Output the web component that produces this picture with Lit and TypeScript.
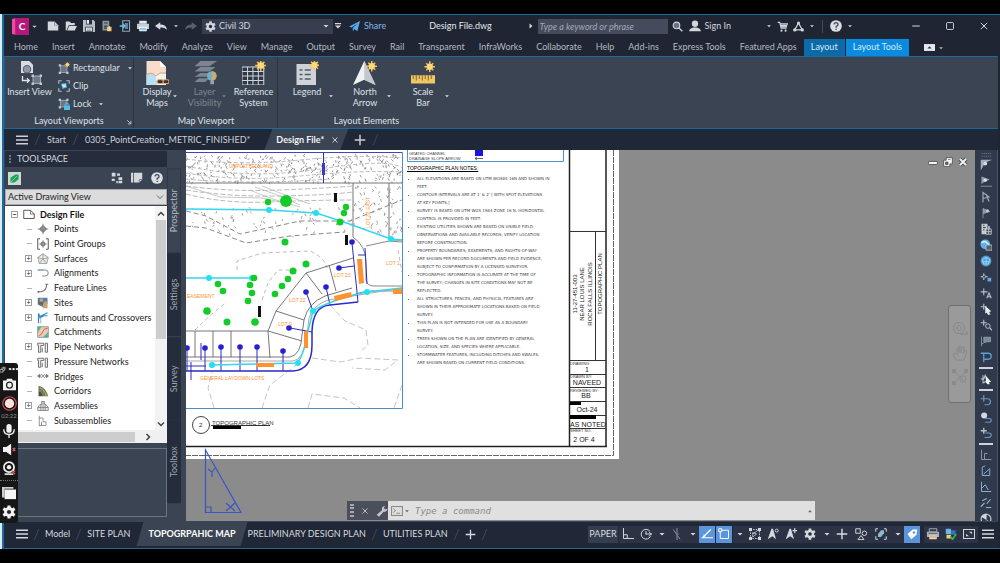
import { LitElement, html, css, svg } from "lit";
import { customElement } from "lit/decorators.js";
import { classMap } from "lit/directives/class-map.js";

const sun = (x: number, y: number, r = 3) => svg`
  <path d=${`M${x} ${y - r * 1.7}V${y + r * 1.7}M${x - r * 1.7} ${y}H${x + r * 1.7}M${x - r * 1.1} ${y - r * 1.1}L${x + r * 1.1} ${y + r * 1.1}M${x + r * 1.1} ${y - r * 1.1}L${x - r * 1.1} ${y + r * 1.1}`} stroke="#f3c25c" stroke-width="1"/>
  <circle cx=${x} cy=${y} r=${r} fill="#ffd778"/>`;

/* Every glyph is drawn on a 16 x 16 grid. */
const GLYPHS: Record<string, unknown> = {
  logo: svg`<path d="M0 1L4 0V16L0 15Z" fill="#f04aa6"/><path d="M3 0H16V16H3Z" fill="#b5177a"/>`,
  caret: svg`<path d="M3 6H13L8 11Z" fill="currentColor"/>`,
  caretUp: svg`<path d="M3 11H13L8 5Z" fill="currentColor"/>`,
  caretRight: svg`<path d="M5 3V13L11 8Z" fill="currentColor"/>`,
  dropline: svg`<path d="M3 3H13V5H3ZM3 7H13L8 12Z" fill="currentColor"/>`,
  newfile: svg`<path d="M1 2H10L15 7V14H1Z" fill="#d5d8dd"/><path d="M10 2V7H15" fill="none" stroke="#7d8592"/>`,
  open: svg`<path d="M1 14V2H6L8 4H13V7H5L2 14Z" fill="#d5d8dd"/><path d="M5.500 8H16L13 14H3Z" fill="#d5d8dd"/>`,
  save: svg`<path d="M0 0H14L16 2V16H0Z" fill="#b9bfc9"/><path d="M4 0H12V6H4ZM3 9H13V16H3Z" fill="#2a3140"/><path d="M5 0H8V5H5ZM4 10H12V15H4Z" fill="#e6e8ec"/><path d="M5 12H11M5 14H11" stroke="#7d8592"/>`,
  saveweb: svg`<path d="M2 1H11V14H2Z" fill="#8b92a0"/><path d="M4 3H9V5H4ZM4 7H9V12H4Z" fill="#505968"/><path d="M8 9H14V15H8Z" fill="#e9c46c"/><path d="M11 8V14" stroke="#fff0c4"/>`,
  export: svg`<path d="M5 1H14V15H5Z" fill="none" stroke="#8fa5b8" stroke-width="1.500"/><path d="M8 4H12V12H8Z" fill="#6c7f92"/><path d="M1 8H7M5 5L8 8L5 11" stroke="#5cc2ef" stroke-width="1.800" fill="none"/>`,
  print: svg`<path d="M3 1H13V5H3Z" fill="#e6e8ec"/><path d="M0 5H16V12H0Z" fill="#c9ced6"/><path d="M3 9H13V15H3Z" fill="#fff"/><path d="M4 11H12M4 13H12" stroke="#3ca3dd"/>`,
  printOrange: svg`<path d="M3 1H13V5H3Z" fill="none" stroke="#c9ced6"/><path d="M0 5H16V12H0Z" fill="#aeb4bf"/><path d="M2 7H14" stroke="#3a4353"/><path d="M3 10H13V15H3Z" fill="#f3d6b9"/><path d="M4 12H12" stroke="#c98850"/>`,
  undo: svg`<path d="M0 8L7 3V6Q15 6 16 13Q12 9.500 7 10V13Z" fill="#d5d8dd"/>`,
  redo: svg`<path d="M16 8L9 3V6Q1 6 0 13Q4 9.500 9 10V13Z" fill="#596171"/>`,
  gear: svg`<path d="M8 .5V15.500M1.500 4.250L14.500 11.750M14.500 4.250L1.500 11.750" stroke="currentColor" stroke-width="3.600"/><circle cx="8" cy="8" r="5.600" fill="currentColor"/><circle cx="8" cy="8" r="2.400" fill="#222938"/>`,
  plane: svg`<path d="M0 8L16 0L12 15L8 11.500L5.500 15V10L13 3L4 9.500Z" fill="#58aef0"/>`,
  search: svg`<circle cx="6.500" cy="6.500" r="4.800" fill="#6b7382" stroke="currentColor" stroke-width="1.600"/><path d="M10 10L15 15" stroke="currentColor" stroke-width="2"/>`,
  user: svg`<circle cx="8" cy="5" r="4.200" fill="currentColor"/><path d="M0 15Q1 10.500 6 10H10Q15 10.500 16 15Z" fill="currentColor"/>`,
  cart: svg`<path d="M1 2H4L6 10.500H14M5 4H15L13.500 8.500H6" fill="none" stroke="currentColor" stroke-width="1.600"/><path d="M5 5H14L13 8H6Z" fill="currentColor"/><circle cx="6.500" cy="14" r="1.500" fill="currentColor"/><circle cx="12.500" cy="14" r="1.500" fill="currentColor"/>`,
  share3: svg`<path d="M8 3L2.500 13H13.500Z" fill="none" stroke="currentColor" stroke-width="1.800"/><circle cx="8" cy="3" r="2.200" fill="currentColor"/><circle cx="2.500" cy="13" r="2.400" fill="currentColor"/><circle cx="13.500" cy="13" r="2.400" fill="currentColor"/>`,
  help: svg`<circle cx="8" cy="8" r="7.800" fill="#dcdfe3"/><path d="M5.500 6Q5.500 3.500 8 3.500Q10.700 3.500 10.700 6Q10.700 7.500 8.200 8.500V10.300M8.200 11.500V13.300" fill="none" stroke="#3d4655" stroke-width="1.700"/>`,
  min: svg`<path d="M2 8H14" stroke="currentColor" stroke-width="1.600"/>`,
  max: svg`<rect x="2.500" y="2.500" width="11" height="11" rx="1.500" fill="none" stroke="currentColor" stroke-width="1.500"/>`,
  close: svg`<path d="M3 3L13 13M13 3L3 13" stroke="currentColor" stroke-width="1.600"/>`,
  docMin: svg`<rect x="1" y="7" width="14" height="5" rx="1" fill="#f4f4f4" stroke="#555" stroke-width="1.500"/>`,
  docRestore: svg`<path d="M5 1H15V11H11V15H1V5H5Z" fill="#f4f4f4" stroke="#555" stroke-width="1.400"/><path d="M4 8H8V12H4ZM8 4H12" fill="#555" stroke="#555"/>`,
  docClose: svg`<path d="M3 3L13 13M13 3L3 13" stroke="#555" stroke-width="6"/><path d="M3 3L13 13M13 3L3 13" stroke="#f4f4f4" stroke-width="3.200"/>`,
  panelbtn: svg`<rect x="0" y="3" width="16" height="10" fill="#e6e8ec"/><path d="M5 9.500H11L8 6Z" fill="#2a3140"/>`,
  launcher: svg`<path d="M3 3L11 11M13 5V13H5" fill="none" stroke="currentColor" stroke-width="2"/>`,
  insertView: svg`<path d="M2 0H7.500L10 2.500V8H2Z" fill="#d9dce1"/><circle cx="6" cy="5.500" r="2.500" fill="#8d97a6" stroke="#566071" stroke-width=".7"/><path d="M3 10V13H7M6 11.500L7.500 13L6 14.500" fill="none" stroke="#dfe2e6" stroke-width=".9"/><rect x="10" y="10" width="5" height="5" fill="#707988" stroke="#aeb5c0" stroke-width=".6"/><path d="M9 9h1.600v1.600H9ZM14.400 9H16v1.600h-1.600ZM9 14.400h1.600V16H9ZM14.400 14.400H16V16h-1.600Z" fill="#c3c8d0"/>`,
  rectview: svg`<rect x="3" y="5" width="9" height="9" fill="#6c7584" stroke="#aeb5c0"/><path d="M1 3h3v3H1ZM1 13h3v3H1ZM11 13h3v3h-3Z" fill="#c3c8d0"/>${sun(12.5, 3.5, 2.2)}`,
  clip: svg`<path d="M1 5V1H5M11 1H15V5M15 11V15H11M5 15H1V11" fill="none" stroke="#aeb5c0" stroke-width="1.600"/><path d="M4 5L11 4L12 10L6 12Z" fill="#4fb4e8"/><path d="M5 6L10 5.500L10.500 9L7 10Z" fill="#cdeafa"/>`,
  lock: svg`<rect x="3" y="3" width="9" height="9" fill="#6c7584" stroke="#aeb5c0"/><path d="M1 1h3v3H1ZM11 1h3v3h-3ZM1 11h3v3H1Z" fill="#c3c8d0"/><rect x="8" y="10" width="8" height="6" fill="#52c0e6"/><path d="M9.500 10V8Q12 5.500 14.500 8V10" fill="none" stroke="#52c0e6" stroke-width="1.300"/>`,
  displayMaps: svg`<path d="M1 0H10L14 4V16H1Z" fill="#f6dcc9"/><path d="M1 9Q5 7 7 10L8 16H1Z" fill="#b9e0f2"/><path d="M7 10Q10 7 14 9V16H8Z" fill="#f2f2ef"/><path d="M10 0L14 4H10Z" fill="#fff"/><path d="M1 9Q5 7 7 10Q10 7 14 8" fill="none" stroke="#c98b6e" stroke-width=".5"/><rect x="8" y="12.500" width="4.500" height="2.500" rx="1.200" fill="#3b3028" stroke="#e0a673" stroke-width=".8"/><rect x="12" y="12.500" width="4" height="2.500" rx="1.200" fill="#3b3028" stroke="#e0a673" stroke-width=".8"/>`,
  layers: svg`<path d="M5 0H16L11 3.500H1ZM5 4H15L11 7H1ZM5 8H12L9 10.500H1ZM4 11.500H11L8 14H1Z" fill="#7d8592"/><circle cx="12.500" cy="10" r="3.200" fill="#6ab1c9"/><path d="M12.500 6.800A3.200 3.200 0 0 1 12.500 13.200Z" fill="#c9ac70"/><path d="M11.500 13H14V15.500H11.500Z" fill="#98a1ae"/>`,
  refsys: svg`<rect x="0" y="4" width="14.500" height="12" fill="#303847" stroke="#cdd1d8" stroke-width=".7"/><path d="M0 7H14.500M0 10H14.500M0 13H14.500M3.700 4V16M7.300 4V16M10.900 4V16" stroke="#cdd1d8" stroke-width=".7"/>${sun(12.5, 3, 2.2)}`,
  legend: svg`<path d="M1 2H12L14 4V16H1Z" fill="#cfd3d8"/><path d="M3 6H5M3 9H5M3 12H5M6.500 6H10.500M6.500 9H10.500M6.500 12H10.500" stroke="#525c6b" stroke-width=".9"/>${sun(13, 2.8, 2.1)}`,
  north: svg`<path d="M7.500 0L15 16L7.500 12.500L0 16Z" fill="#f0f1f3"/><path d="M7.500 0L15 16L7.500 12.500Z" fill="#c3c7cd"/>${sun(12.500, 3.5, 2.1)}`,
  scalebar: svg`<rect x="0" y="9.500" width="16" height="5.500" fill="#f1c766"/><path d="M1.500 9.500V12M3.500 9.500V13M5.500 9.500V12M7.500 9.500V13M9.500 9.500V12M11.500 9.500V13M13.500 9.500V12" stroke="#6f5a2b" stroke-width=".6"/>${sun(12.5, 3.8, 2.1)}`,
  menu: svg`<path d="M0 3H16M0 8H16M0 13H16" stroke="currentColor" stroke-width="2"/>`,
  plus: svg`<path d="M8 1V15M1 8H15" stroke="currentColor" stroke-width="1.900"/>`,
  leaf: svg`<rect width="16" height="16" fill="#cfd8d4"/><path d="M3 13V7L9 3H13V9L8 13Z" fill="#1fa35b"/><path d="M3 13L11 5" stroke="#7be0a6"/>`,
  tree: svg`<path d="M1 1H6V6H1ZM1 9H5V12H1ZM10 7H15V11H10ZM10 12H15V15H10ZM7 12H9V15H7ZM8 2H12V5H8Z" fill="#d5d8dd"/>`,
  pane: svg`<path d="M0 1H3V14H0ZM4 1H15V10L11 14H4Z" fill="#d5d8dd"/><path d="M11 14V10H15" fill="none" stroke="#5a6373"/>`,
  doc: svg`<path d="M1 3H10L15 8V14H1Z" fill="#fff" stroke="#555" stroke-width="1.300"/><path d="M10 3V8H15" fill="none" stroke="#555"/>`,
  points: svg`<path d="M8 0L10 6L16 8L10 10L8 16L6 10L0 8L6 6Z" fill="#8c8c8c"/><circle cx="8" cy="8" r="3.500" fill="#8c8c8c" stroke="#777"/>`,
  pgroups: svg`<path d="M4 1H1V15H4M12 1H15V15H12" fill="none" stroke="#555" stroke-width="1.300"/><path d="M8 3V13M3 8H13" stroke="#666"/><circle cx="8" cy="8" r="2.800" fill="#999" stroke="#555"/>`,
  surfaces: svg`<path d="M8 1L15 6L13 14H3L1 6ZM1 6L8 8L15 6M8 8L3 14M8 8L13 14M8 1V8" fill="#e8e8e8" stroke="#8c8c8c"/>`,
  align: svg`<path d="M1 4H11Q15 4 15 8Q15 12 11 12H7" fill="none" stroke="#7d8a96" stroke-width="1.300"/><path d="M1 4H9" stroke="#6f93b5"/>`,
  feature: svg`<path d="M1 13H5Q13 12 13 3M11 3H15" fill="none" stroke="#777" stroke-width="1.500"/><circle cx="2" cy="13" r="1.500" fill="#777"/>`,
  sites: svg`<path d="M1 1H14V9L9 14L1 10Z" fill="#557fa5"/><path d="M4 2H8V6H4ZM10 6H14V15H8V10Z" fill="#c7a46b"/><path d="M1 7H8V10H3Z" fill="#6b5f57"/>`,
  turnout: svg`<path d="M2 15V2L4 6L14 1M3 8L9 5L14 5" fill="none" stroke="#2f86c9" stroke-width="1.600"/><path d="M5 15V8" stroke="#999"/>`,
  catch: svg`<rect x="1" y="1" width="14" height="14" fill="#f0c9b0" stroke="#7a8a83"/><path d="M1 1H6L1 9ZM8 15L15 8V15Z" fill="#4db6a0"/><path d="M3 13Q7 11 8 7T14 3" fill="none" stroke="#a2514c"/>`,
  pipes: svg`<path d="M1 3H9V6H5V15H2V6H1ZM11 3H14V15H11ZM7 9V15" fill="#ececec" stroke="#666" stroke-width="1.200"/>`,
  bridges: svg`<path d="M0 8L4 5V11ZM16 8L12 5V11Z" fill="#777"/><circle cx="6" cy="8" r="1.800" fill="none" stroke="#777"/><circle cx="10" cy="8" r="1.800" fill="none" stroke="#777"/>`,
  corridors: svg`<path d="M2 1Q12 3 15 15H8Q7 9 2 8Z" fill="#6f7f55"/><path d="M2 1V15H8Q7 9 2 8Z" fill="#4e4e48"/><path d="M4 4Q11 7 12 15" stroke="#d9c76b" fill="none"/>`,
  assemblies: svg`<path d="M1 10L4 6H6V2H10V6H12L15 10V14H1ZM1 10H15M8 2V14M5 6V14M11 6V14" fill="#e8e8e8" stroke="#777"/>`,
  subasm: svg`<path d="M3 1V15M3 4H8V9H12V14H3M6 9V14" fill="none" stroke="#888" stroke-width="1.200"/>`,
  wrench: svg`<path d="M1 13L8 7Q7 2 12 1L10.500 4L12.500 6L15.500 4.500Q15 9 10 9L4 15.500Z" fill="#c3c7cf"/>`,
  prompt: svg`<rect x=".7" y="2" width="14.600" height="12" fill="#ddd" stroke="#8a8a8a" stroke-width="1.400"/><path d="M3 5L6 7.500L3 10M7 11H12" stroke="#777" fill="none"/>`,
  ortho: svg`<path d="M2 0V14H16M2 9H7V14" fill="none" stroke="currentColor" stroke-width="1.300"/>`,
  polar: svg`<path d="M13 4A6.500 6.500 0 1 0 14 11M7 8H16M12 5L15 8L12 11M8 8V4" fill="none" stroke="currentColor" stroke-width="1.300"/>`,
  iso: svg`<path d="M3 2L12 15M8 0V16" stroke="#8d95a3" stroke-width="1.300"/><path d="M11 7L8 11" stroke="#b65b5b"/>`,
  otrack: svg`<path d="M13 2L2 13H16" fill="none" stroke="currentColor" stroke-width="1.600"/><path d="M5 13Q6 9 3 9" stroke="currentColor" fill="none"/>`,
  osnap: svg`<path d="M3 3H14V14H3Z" fill="none" stroke="currentColor" stroke-width="1.300"/><path d="M1 1H5V5H1Z" fill="#6ba0dd" stroke="currentColor" stroke-width="1.200"/>`,
  selcycle: svg`<rect x="2" y="2" width="12" height="12" fill="none" stroke="currentColor" stroke-width="1.200" stroke-dasharray="2 1.500"/><path d="M0 0H4V4H0ZM12 12H16V16H12ZM12 0H16V4H12ZM0 12H4V16H0Z" fill="currentColor"/><path d="M12 3L5 8M5 6V12L10 8Z" fill="none" stroke="currentColor"/>`,
  annot: svg`<path d="M6 1L8 1L12 15L7 11L1 15Z" fill="currentColor"/><circle cx="13" cy="3.500" r="2" fill="none" stroke="currentColor" stroke-width="1.200"/>`,
  annotAdd: svg`<path d="M6 1L8 1L12 15L7 11L1 15Z" fill="currentColor"/><path d="M13 0V7M10 3.500H16" stroke="currentColor" stroke-width="1.500"/>`,
  isolate: svg`<path d="M1 1H7V7H1Z" fill="none" stroke="currentColor" stroke-width="1.300"/><circle cx="12.500" cy="7" r="3" fill="none" stroke="currentColor" stroke-width="1.300"/><path d="M8 10L12 15.500H4Z" fill="none" stroke="currentColor" stroke-width="1.300"/>`,
  hardware: svg`<path d="M1 5V1H4M12 1H15V5M15 11V15H12M4 15H1V11" fill="none" stroke="currentColor" stroke-width="1.300"/><path d="M4 12V8L8 3H12V7L8 12Z" fill="#8cb9cf"/>`,
  tag: svg`<path d="M2 8L9 2L15 2L14 9L7 15Z" fill="#fff"/><circle cx="10.500" cy="6" r="1.600" fill="#5b95dd"/>`,
  cloudmix: svg`<path d="M1 1H8V8H1Z" fill="#6fb5ea"/><path d="M8 3H14V9H8Z" fill="#3773b3"/><path d="M2 9H8V14H2Z" fill="#f1d173"/><path d="M7 11L10 15L15 8" fill="none" stroke="#3cb55c" stroke-width="2.200"/>`,
  full: svg`<rect x=".7" y="2" width="14.600" height="12" fill="none" stroke="currentColor" stroke-width="1.300"/><path d="M8 5H12V8ZM4 8V11H8Z" fill="currentColor"/>`,
  grip: svg`<path d="M1 5H15M1 9H15" stroke="#7d8696" stroke-width="1.300" stroke-dasharray="1.500 1.500"/>`,
  s1: svg`<path d="M1 15V1H16L7 5Z" fill="#a4aebb"/><circle cx="7" cy="6" r="2.500" fill="#d9dde2"/>`,
  s2: svg`<path d="M1 15H16" stroke="#98a3b1"/><path d="M2 12V2L13 6L6 9Z" fill="#98a3b1"/><circle cx="7" cy="7" r="2.200" fill="#d9dde2"/>`,
  s3: svg`<path d="M4 15V2L12 8L4 10M8 4L12 14" fill="none" stroke="#9aa5b2" stroke-width="1.700"/>`,
  s4: svg`<path d="M4 15V2L13 6L4 9" fill="#8a95a4" stroke="#9aa5b2"/><circle cx="10" cy="5" r="2" fill="#c2c8d0"/>`,
  s5: svg`<path d="M2 1H10V15H2ZM11 4H13V8H11Z" fill="#c5cad2"/><path d="M4 3H6M4 6H8M4 9H6" stroke="#3a4353" stroke-width="1.300"/><path d="M8 8H15V15H8Z" fill="#354052" stroke="#d5d9df"/><path d="M11.500 8V15M8 11.500H15" stroke="#d5d9df"/>`,
  s6: svg`<circle cx="7" cy="7" r="6.500" fill="#5cb2e8"/><path d="M2 5Q6 2 9 5T12 8" stroke="#d4efff" stroke-width="2" fill="none"/><path d="M8 8H16V15H8Z" fill="#57606f" stroke="#bcc3cc"/>`,
  s7: svg`<circle cx="8" cy="8" r="7.200" fill="#4b9fd6"/><path d="M3 6L8 3L13 6L11 12H5ZM8 3V13M3 9H13" fill="none" stroke="#b5dcf5"/>`,
  s8: svg`<path d="M5 3V12M1 7.500H10" stroke="#b8c0ca" stroke-width="1.500"/><circle cx="5.500" cy="7.500" r="2" fill="#344052" stroke="#b8c0ca"/><path d="M10 9H15V14H10Z" fill="#67a6dc"/>`,
  s9: svg`<path d="M5 2V11M1 6.500H10" stroke="#b8c0ca" stroke-width="1.500"/><path d="M9 15L12 8L15 15M10 13H14" fill="none" stroke="#b8c0ca" stroke-width="1.500"/>`,
  s10: svg`<path d="M5 1V9M1 5H9" stroke="#b8c0ca" stroke-width="1.500"/><path d="M7 4L15 11L12 12L14 15L11 16L9 13L7 14Z" fill="#e8ebee"/>`,
  s11: svg`<path d="M5 1V9M1 5H9" stroke="#b8c0ca" stroke-width="1.500"/><circle cx="10.500" cy="9.500" r="3" fill="none" stroke="#b8c0ca" stroke-width="1.300"/><path d="M13 12L16 15" stroke="#b8c0ca" stroke-width="1.600"/>`,
  s12: svg`<path d="M2 15V2M5 3H14V9H5Z" fill="#7c8796" stroke="#9aa5b2"/><path d="M2 12L8 9" stroke="#9aa5b2"/>`,
  s13: svg`<path d="M1 3H11Q15 3 15 7Q15 11 10 11H6M5 3V15" fill="none" stroke="#5f9fd0" stroke-width="1.700"/>`,
  s14: svg`<path d="M1 8H5L7 3L9 10L5 13M4 3V14" fill="none" stroke="#c3c9d1" stroke-width="1.400"/><path d="M8 4L15 12L12 12L13 15L10 15L8 13Z" fill="#f0f2f4"/>`,
  s15: svg`<path d="M5 0V9M1 5H10Q14 5 14 9Q14 13 9 13H6" fill="none" stroke="#6f94b8" stroke-width="1.600"/>`,
  s16: svg`<circle cx="5.500" cy="6" r="4" fill="#d5d9df"/><path d="M7 10H12Q15 10 15 12.500Q15 15 11 15H7" fill="none" stroke="#6f94b8" stroke-width="1.500"/>`,
  s17: svg`<path d="M5 1V9M1 5H9" stroke="#b8c0ca" stroke-width="1.800"/><path d="M7 8H12Q15 8 15 11Q15 14 10 14H6" fill="none" stroke="#6f94b8" stroke-width="1.500"/>`,
  s18: svg`<path d="M2 1V14H15M6 14V6H10" fill="none" stroke="#8d99a8" stroke-width="1.300"/>`,
  s19: svg`<path d="M3 3V14H13V5L5 12M3 3L7 1" fill="none" stroke="#8db2cf" stroke-width="1.300"/>`,
  s20: svg`<path d="M2 1V14H15M2 10L7 5L11 12" fill="none" stroke="#8db2cf" stroke-width="1.300"/>`,
  s21: svg`<path d="M1 13L6 8M3 5L9 2M9 9L14 3M8 14H15" fill="none" stroke="#8db2cf" stroke-width="1.500"/>`,
  s22: svg`<circle cx="8" cy="8" r="6.500" fill="none" stroke="#b9c0c9" stroke-width="1.700"/><path d="M8 8L3 5L8 2ZM9 10L14 14" fill="#c8cdd4" stroke="#d7dbe0" stroke-width="1.500"/>`,
  windows: svg`<path d="M2 8H9V14H2ZM5 5H12V11H9M8 3H14V8" fill="none" stroke="#eee" stroke-width="1.400"/>`,
  camera: svg`<path d="M0 3H4L5 1H11L12 3H16V15H0Z" fill="#f2f2f2"/><circle cx="8" cy="8.800" r="3.600" fill="#f2f2f2" stroke="#222" stroke-width="1.500"/>`,
  record: svg`<circle cx="8" cy="8" r="7.200" fill="none" stroke="#c84a50" stroke-width="1.300"/><circle cx="8" cy="8" r="5" fill="#fbe3dd"/>`,
  mic: svg`<rect x="5" y="0" width="6" height="10" rx="3" fill="#f2f2f2"/><path d="M2 6Q2 12 8 12Q14 12 14 6M8 12V16" fill="none" stroke="#f2f2f2" stroke-width="1.500"/>`,
  speaker: svg`<path d="M0 5H4L10 1V15L4 11H0Z" fill="#f2f2f2"/><path d="M12 6L15 10M15 6L12 10" stroke="#d15b66" stroke-width="1.600"/>`,
  webcam: svg`<circle cx="8" cy="7" r="5.800" fill="none" stroke="#f2f2f2" stroke-width="2"/><circle cx="8" cy="7" r="2.500" fill="#f2f2f2"/><path d="M3 15H13" stroke="#f2f2f2" stroke-width="1.800"/><path d="M11 11L15 15M15 11L11 15" stroke="#d15b66" stroke-width="1.400"/>`,
  gallery: svg`<path d="M0 1H13V3H3V13H0Z" fill="#cfcfcf"/><path d="M3 4H16V15H3Z" fill="#f7f7f7"/>`,
  wheel: svg`<circle cx="7" cy="7" r="5.500" fill="none" stroke="currentColor"/><circle cx="7" cy="7" r="2.500" fill="none" stroke="currentColor"/><path d="M8 13H15V10" fill="none" stroke="currentColor" stroke-width="1.500"/>`,
  hand: svg`<path d="M4 15L1 9L3 8L5 10V3H7V8V1H9V8L10 2H12L11.500 9L13 5L15 6L13 12L12 15Z" fill="none" stroke="currentColor"/>`,
  zoomext: svg`<path d="M2 2L14 14M14 2L2 14" stroke="currentColor"/><path d="M0 0H4V4H0ZM12 0H16V4H12ZM0 12H4V16H0Z" fill="currentColor"/><circle cx="11" cy="10" r="3" fill="none" stroke="currentColor"/>`,
};

const icon = (name: string, size = 12, cls = "") =>
  html`<svg class=${cls} width=${size} height=${size} viewBox="0 0 16 16" aria-hidden="true">${GLYPHS[name]}</svg>`;

const base = css`
  :host, * { box-sizing: border-box; }
  button, input, select {
    font: inherit; color: inherit; background: none; border: 0; padding: 0; margin: 0; border-radius: 0; outline: 0;
  }
  button { display: flex; align-items: center; justify-content: center; white-space: nowrap; }
  select { appearance: none; }
  a { color: inherit; text-decoration: none; white-space: nowrap; }
  svg { flex: none; display: block; }
`;

@customElement("title-bar")
class TitleBar extends LitElement {
  static styles = [base, css`
    :host { display: flex; align-items: center; height: 24px; padding: 0 9px 2px 8px; color: #d3d7dd; }
    .logo { position: relative; width: 17px; height: 17px; }
    .letter { position: absolute; inset: 0 0 0 3px; font-weight: 700; font-size: 10px; line-height: 16px; color: #fff; text-align: center; }
    .quick { display: flex; align-items: center; gap: 6px; margin: 0 5px 0 2px; }
    .files { margin-left: 3px; }
    .combo { display: flex; align-items: center; width: 131px; height: 15px; background: #363e4f; padding: 0 3px; gap: 3px; }
    .combo select { flex: 1; min-width: 0; }
    .share { gap: 4px; color: #7fb9ea; margin-left: 6px; }
    .name { flex: 1; padding-left: 43px; color: #e6e8ec; white-space: nowrap; }
    .search { width: 130px; height: 15px; background: #434b5d; padding: 0 2px; font-style: italic; margin-left: 3px; }
    .search::placeholder { color: #a3aab8; opacity: 1; }
    .account { display: flex; align-items: center; gap: 6px; margin-left: 4px; }
    .sign { gap: 4px; }
    .extra { display: flex; align-items: center; gap: 5px; margin-left: 35px; }
    .rule { width: 1px; height: 13px; background: #444c5b; margin: 0 2px; }
    .window { display: flex; gap: 24px; margin-left: 58px; }
  `];
  render() {
    return html`
      <span class="logo">${icon("logo", 17)}<span class="letter">C</span></span>
      <div class="quick">
        <button aria-label="Application menu">${icon("caret", 7)}</button>
        <button class="files" aria-label="New">${icon("newfile")}</button>
        <button aria-label="Open">${icon("open")}</button>
        <button aria-label="Save">${icon("save")}</button>
        <button aria-label="Save to web">${icon("saveweb")}</button>
        <button aria-label="Export">${icon("export")}</button>
        <button aria-label="Plot">${icon("print")}</button>
        <button aria-label="Undo">${icon("undo")}</button>
        <button aria-label="Undo list">${icon("caret", 6)}</button>
        <button aria-label="Redo">${icon("redo")}</button>
      </div>
      <label class="combo">${icon("gear", 11)}
        <select aria-label="Workspace"><option>Civil 3D</option></select>${icon("caret", 8)}
      </label>
      <button aria-label="Customize">${icon("dropline", 10)}</button>
      <button class="share">${icon("plane", 11)}Share</button>
      <span class="name">Design File.dwg</span>
      ${icon("caretRight", 8)}
      <input class="search" type="text" aria-label="Search help" placeholder="Type a keyword or phrase" />
      <div class="account">
        <button aria-label="Search">${icon("search", 11)}</button>
        <button class="sign">${icon("user")}Sign In</button>
      </div>
      <div class="extra">
        <button aria-label="Account menu">${icon("caret", 6)}</button>
        <button aria-label="App store">${icon("cart", 11)}</button>
        <button aria-label="Autodesk apps">${icon("share3", 11)}</button>
        <button aria-label="Apps menu">${icon("caret", 6)}</button>
        <span class="rule"></span>
        <button aria-label="Help">${icon("help")}</button>
        <button aria-label="Help menu">${icon("caret", 6)}</button>
      </div>
      <div class="window">
        <button aria-label="Minimize">${icon("min", 10)}</button>
        <button aria-label="Maximize">${icon("max", 10)}</button>
        <button aria-label="Close">${icon("close", 10)}</button>
      </div>`;
  }
}

@customElement("ribbon-area")
class RibbonArea extends LitElement {
  static styles = [base, css`
    :host { display: block; color: #dfe2e7; }
    .tabs { display: flex; height: 17px; align-items: stretch; padding-left: 3px; color: #b3b9c4; }
    .tabs a { padding: 0 7px; line-height: 16px; }
    .tabs .context { background: #0c6aa8; color: #d6eaf8; }
    .tabs .tools { background: #0a8be0; color: #d6eaf8; margin-left: 1px; }
    .toggle { gap: 3px; margin-left: 15px; }
    .ribbon { display: flex; height: 73px; background: #3b4453; border: 1px solid #1d6a9c; border-right-color: #3b4453; border-left-color: #2a5878; }
    .group { display: grid; grid-template-rows: 1fr 14px; border-right: 1px solid #2b3341; }
    .group.last { border: 0; }
    .tools-row { display: flex; padding-top: 4px; }
    .caption { display: flex; align-items: center; justify-content: center; position: relative; }
    .corner { position: absolute; right: 1px; top: 5px; }
    .viewports { width: 129px; }
    .maps { width: 144px; }
    .elements { width: 177px; }
    .big { flex-direction: column; justify-content: flex-start; gap: 1px; line-height: 11px; position: relative; }
    .big .drop { position: absolute; right: 2px; top: 32px; }
    .dim { color: #7d8592; }
    .stack { display: flex; flex-direction: column; gap: 4px; margin-left: 4px; }
    .stack button { gap: 3px; height: 14px; justify-content: flex-start; }
    .w46 { width: 46px; } .w50 { width: 49px; } .w58 { width: 58px; }
    .stack .drop { margin-left: 4px; }
    .two { display: block; text-align: center; }
  `];
  private tabs = ["Home", "Insert", "Annotate", "Modify", "Analyze", "View", "Manage", "Output", "Survey", "Rail",
    "Transparent", "InfraWorks", "Collaborate", "Help", "Add-ins", "Express Tools", "Featured Apps"];
  private big(name: string, a: string, b: string, cls: string, drop = false) {
    return html`<button class="big ${cls}">${icon(name, 24)}<span class="two">${a}${b ? html`<br />${b}` : ""}</span>
      ${drop ? icon("caret", 6, "drop") : ""}</button>`;
  }
  render() {
    return html`
      <nav class="tabs">
        ${this.tabs.map((t) => html`<a href="#">${t}</a>`)}
        <a class="context" href="#">Layout</a><a class="tools" href="#">Layout Tools</a>
        <button class="toggle" aria-label="Ribbon display">${icon("panelbtn", 11)}${icon("caret", 6)}</button>
      </nav>
      <div class="ribbon">
        <section class="group viewports">
          <div class="tools-row">
            ${this.big("insertView", "Insert View", "", "w50")}
            <div class="stack">
              <button>${icon("rectview")}Rectangular${icon("caret", 6, "drop")}</button>
              <button>${icon("clip")}Clip</button>
              <button>${icon("lock")}Lock${icon("caret", 6, "drop")}</button>
            </div>
          </div>
          <div class="caption">Layout Viewports<span class="corner">${icon("launcher", 6)}</span></div>
        </section>
        <section class="group maps">
          <div class="tools-row">
            ${this.big("displayMaps", "Display", "Maps", "w46", true)}
            ${this.big("layers", "Layer", "Visibility", "w50 dim", true)}
            ${this.big("refsys", "Reference", "System", "w50")}
          </div>
          <div class="caption">Map Viewport</div>
        </section>
        <section class="group elements last">
          <div class="tools-row">
            ${this.big("legend", "Legend", "", "w58", true)}
            ${this.big("north", "North", "Arrow", "w58", true)}
            ${this.big("scalebar", "Scale", "Bar", "w58", true)}
          </div>
          <div class="caption">Layout Elements</div>
        </section>
      </div>`;
  }
}

@customElement("file-tabs")
class FileTabs extends LitElement {
  static styles = [base, css`
    :host { display: flex; align-items: center; height: 21px; background: #202736; color: #ccd0d7; padding-left: 12px; }
    .slash { width: 1px; height: 11px; background: #3f4756; transform: skewX(-22deg); margin: 0 9px; }
    .active { display: flex; gap: 7px; align-self: stretch; align-items: center; margin-left: 14px; padding: 0 9px 0 12px;
      background: #3b4453; color: #f0f2f4; font-weight: 700; clip-path: polygon(8px 0, 100% 0, calc(100% - 8px) 100%, 0 100%); }
    .add { margin-left: 6px; }
  `];
  render() {
    return html`
      <button aria-label="File tab menu">${icon("menu")}</button><span class="slash"></span>
      <a href="#">Start</a><span class="slash"></span>
      <a href="#">0305_PointCreation_METRIC_FINISHED*</a>
      <span class="active"><a href="#">Design File*</a><button aria-label="Close tab">${icon("close", 8)}</button></span>
      <button class="add" aria-label="New tab">${icon("plus")}</button><span class="slash"></span>`;
  }
}

const NODES: [string, string, boolean][] = [
  ["points", "Points", false], ["pgroups", "Point Groups", false], ["surfaces", "Surfaces", true],
  ["align", "Alignments", true], ["feature", "Feature Lines", false], ["sites", "Sites", true],
  ["turnout", "Turnouts and Crossovers", true], ["catch", "Catchments", false], ["pipes", "Pipe Networks", true],
  ["pipes", "Pressure Networks", false], ["bridges", "Bridges", false], ["corridors", "Corridors", false],
  ["assemblies", "Assemblies", true], ["subasm", "Subassemblies", false],
];

@customElement("tool-space")
class ToolSpace extends LitElement {
  static styles = [base, css`
    :host { display: grid; grid-template-columns: 1fr 14px; width: 182px; padding: 1px 5px 4px 1px; background: #3b4453; color: #d3d7dd; }
    .main { display: flex; flex-direction: column; min-width: 0; min-height: 0; }
    .head { display: flex; align-items: center; height: 16px; gap: 6px; background: #252c3b; padding-left: 4px; }
    .dots { width: 2px; height: 8px; border-left: 2px dotted #6e7787; }
    .bar { display: flex; align-items: center; gap: 8px; height: 22px; padding: 0 4px 0 3px; }
    .bar .first { margin-right: auto; }
    .view { display: flex; align-items: center; height: 16px; background: #dcdcdc; color: #222; padding: 0 2px; border: 1px solid #aaa; }
    .view select { flex: 1; }
    .tree { flex: 1; display: grid; grid-template: 1fr 13px / 1fr 12px; background: #fff; color: #222; margin-top: 1px; min-height: 0; }
    .list { display: flex; flex-direction: column; list-style: none; margin: 0; padding: 1px 0 2px; overflow: hidden; }
    .row { flex: 1; display: flex; align-items: center; gap: 5px; padding-left: 20px; white-space: nowrap; }
    .row.root { padding-left: 6px; font-weight: 700; color: #111; }
    .box { width: 7px; height: 7px; border: 1px solid #9aa0a8; font-size: 7px; line-height: 5px; text-align: center; background: #fff; }
    .box.none { border: 0; height: 1px; background: #b5b5b5; margin-left: 2px; width: 5px; }
    .vscroll { display: flex; flex-direction: column; justify-content: space-between; align-items: center; background: #f3f3f3; padding: 4px 1px 2px; color: #444; gap: 2px; }
    .thumb { width: 10px; height: 119px; background: #cdcdcd; margin-bottom: auto; }
    .hscroll { grid-column: 1 / 3; display: flex; align-items: center; justify-content: space-between; background: #f0f0f0; color: #444; padding-right: 15px; }
    .hthumb { width: 130px; height: 10px; background: #cdcdcd; }
    .preview { height: 69px; margin-top: 5px; border: 1px solid #6c7482; }
    .side { display: flex; flex-direction: column; padding-top: 17px; margin-bottom: 14px; }
    .side button { flex: 1; background: #252c3b; color: #9da4b0; writing-mode: vertical-rl; transform: rotate(180deg); }
    .side .on { background: #3b4453; border: 1px solid #303847; color: #b5bbc5; }
  `];
  render() {
    return html`
      <div class="main">
        <div class="head"><span class="dots"></span>TOOLSPACE</div>
        <div class="bar">
          <button class="first" aria-label="Drawing item">${icon("leaf", 13)}</button>
          <button aria-label="Item tree">${icon("tree")}</button>
          <button aria-label="Panorama">${icon("pane")}</button>
          <button aria-label="Help">${icon("help")}</button>
        </div>
        <label class="view"><select aria-label="View"><option>Active Drawing View</option></select>
          <svg width="8" height="8" viewBox="0 0 8 8"><path d="M1 2.500L4 5.500L7 2.500" fill="none" stroke="#666"/></svg></label>
        <div class="tree">
          <ul class="list">
            <li class="row root"><span class="box">−</span>${icon("doc")}Design File</li>
            ${NODES.map(([g, t, open]) => html`<li class="row">
              <span class=${classMap({ box: true, none: !open })}>${open ? "+" : ""}</span>${icon(g)}${t}</li>`)}
          </ul>
          <div class="vscroll">
            <svg width="8" height="8" viewBox="0 0 8 8"><path d="M1 5.500L4 2.500L7 5.500" fill="none" stroke="#444" stroke-width="1.500"/></svg>
            <span class="thumb"></span>
            <svg width="8" height="8" viewBox="0 0 8 8"><path d="M1 2.500L4 5.500L7 2.500" fill="none" stroke="#444" stroke-width="1.500"/></svg>
          </div>
          <div class="hscroll"><span class="hthumb"></span>
            <svg width="8" height="8" viewBox="0 0 8 8"><path d="M2.500 1L5.500 4L2.500 7" fill="none" stroke="#444" stroke-width="1.500"/></svg>
          </div>
        </div>
        <div class="preview"></div>
      </div>
      <div class="side">
        <button class="on">Prospector</button><button>Settings</button><button>Survey</button><button>Toolbox</button>
      </div>`;
  }
}

const NOTES: string[][] = [
  ["ALL ELEVATIONS ARE BASED ON UTM WGS84 16N AND SHOWN IN", "FEET."],
  ["CONTOUR INTERVALS ARE AT 1' & 2' [ WITH SPOT ELEVATIONS", "AT KEY POINTS.]"],
  ["SURVEY IS BASED ON UTM WGS 1984 ZONE 16 N, HORIZONTAL", "CONTROL IS PROVIDED IN FEET."],
  ["EXISTING UTILITIES SHOWN ARE BASED ON VISIBLE FIELD", "OBSERVATIONS AND AVAILABLE RECORDS; VERIFY LOCATION", "BEFORE CONSTRUCTION."],
  ["PROPERTY BOUNDARIES, EASEMENTS, AND RIGHTS-OF-WAY", "ARE SHOWN PER RECORD DOCUMENTS AND FIELD EVIDENCE,", "SUBJECT TO CONFIRMATION BY A LICENSED SURVEYOR."],
  ["TOPOGRAPHIC INFORMATION IS ACCURATE AT THE TIME OF", "THE SURVEY; CHANGES IN SITE CONDITIONS MAY NOT BE", "REFLECTED."],
  ["ALL STRUCTURES, FENCES, AND PHYSICAL FEATURES ARE", "SHOWN IN THEIR APPROXIMATE LOCATIONS BASED ON FIELD", "SURVEY."],
  ["THIS PLAN IS NOT INTENDED FOR USE AS A BOUNDARY", "SURVEY."],
  ["TREES SHOWN ON THE PLAN ARE IDENTIFIED BY GENERAL", "LOCATION, SIZE, AND SPECIES WHERE APPLICABLE."],
  ["STORMWATER FEATURES, INCLUDING DITCHES AND SWALES,", "ARE SHOWN BASED ON CURRENT FIELD CONDITIONS."],
];

const TREES = [[268, 202, 3.2], [346, 207, 3.2], [344, 213, 3.2], [340, 222, 3.5], [285, 242, 3.5], [306, 264, 3.5],
  [293, 271, 3.5], [288, 279, 3.3], [282, 286, 3.3], [275, 294, 3.3], [254, 278, 3.3], [218, 284, 3.3], [223, 291, 3.3],
  [250, 285, 3.3], [252, 293, 3.3], [248, 301, 3.3], [207, 311, 3.8], [227, 322, 3.5], [255, 322, 3.8], [286, 201, 6]];
const LOTS = [[187, 348], [205, 348], [221, 347], [240, 347], [257, 347], [283, 351]];
const HUBS = [[269, 210], [316, 213], [391, 239], [209, 278], [252, 278], [212, 365], [298, 363], [313, 311], [367, 292]];

/* Slope ticks scattered over a band, repeatable from one draw to the next. */
const ticks = (n: number, x: number, y: number, w: number, h: number, seed: number) => {
  let s = seed, d = "";
  const next = () => (s = (s * 16807) % 2147483647) / 2147483647;
  for (let i = 0; i < n; i++) {
    const a = x + next() * w, b = y + next() * h, k = next() * 4 - 2;
    d += `M${a.toFixed(1)} ${b.toFixed(1)}l${k.toFixed(1)} ${(1 + next() * 2).toFixed(1)}`;
  }
  return d;
};

@customElement("plan-sheet")
class PlanSheet extends LitElement {
  static styles = [base, css`
    :host { display: block; position: relative; width: 433px; height: 309px; background: #fff;
      font-family: "Liberation Sans", Arial, sans-serif; color: #444; }
    .art { position: absolute; inset: 0; }
    .art text { font-family: "Liberation Sans", Arial, sans-serif; }
    .notes { position: absolute; left: 221px; top: 14px; width: 160px; line-height: 8px; }
    .title { font-size: 5px; font-weight: 400; text-decoration: underline; margin: 0; color: #000; }
    .list { margin: 3px 0 0; padding-left: 10px; font-size: 4px; font-family: "DejaVu Sans", sans-serif; }
    .line { white-space: nowrap; display: block; }
  `];
  render() {
    return html`
      <svg class="art" width="433" height="309" viewBox="186 150 433 309" fill="none">
        <defs><clipPath id="frame"><rect x="186" y="152" width="217" height="257"/></clipPath></defs>
        <g clip-path="url(#frame)">
          <path d=${ticks(300, 186, 154, 216, 28, 77)} stroke="#777" stroke-width=".8"/>
          <path d=${ticks(75, 354, 185, 48, 48, 19)} stroke="#888" stroke-width=".8"/>
          <path d=${ticks(60, 192, 206, 160, 30, 5)} stroke="#888" stroke-width=".8"/>
          <path d="M186 159Q240 166 300 160T402 158M186 166Q250 180 320 169T402 168M186 173Q240 182 300 176T402 172M186 179Q250 185 330 179" stroke="#aaa" stroke-width=".8" stroke-dasharray="4 2"/>
          <path d="M186 183H402M353 183V237M389 183V240M389 240H402" stroke="#777"/>
          <path d="M186 186Q230 192 280 190T353 186M186 190Q230 197 280 196T353 192M186 194Q225 204 270 202T353 200" stroke="#a5a5a5" stroke-width=".8" stroke-dasharray="5 2"/>
          <path d="M186 186L220 197L262 198L290 204M255 187Q280 195 300 205M262 186Q290 197 310 204M250 190Q270 199 300 207" stroke="#bbb" stroke-width=".8"/>
          <path d="M186 211L206 216L240 234L300 221L350 221L402 200M186 226L206 228L246 243L290 236L345 232" stroke="#888" stroke-dasharray="5 3"/>
          <path d="M237 270V261L262 253L310 251Q325 258 327 268M262 300L268 283L278 270H300M398 250L402 272M195 330Q215 310 226 303" stroke="#aaa" stroke-width=".8" stroke-dasharray="4 3"/>
          <path d="M330 305L345 321L366 330L368 345L362 350M312 358L340 362L360 358L398 360L385 370L352 368M308 408L312 394L344 398L360 408M262 408L270 385L300 362M214 408L208 388L212 372M402 385L394 408" stroke="#b5b5b5" stroke-width=".8" stroke-dasharray="6 3"/>
          <path d="M353 237Q366 246 366 262V280Q367 286 374 286H402M402 291H372Q362 291 350 296M366 246L389 241L402 242" stroke="#888"/>
          <path d="M186 331H268L276 311L306 273L353 258M268 331L302 341M268 331L270 358M329 265L336 291M306 273L322 294M276 311L304 320M195 331V357M213 331V357M231 331V357M186 357H290Q301 355 302 335L304 320Q308 303 325 296L352 288" stroke="#777"/>
          <path d="M186 361H293Q304 360 307 335L309 318Q313 305 328 300L402 288" stroke="#aaa"/>
          <path d="M186 371H293Q312 370 312 345V331Q313 306 330 305L358 302" stroke="#2b2bc8" stroke-width="1.500"/>
          <path d="M323.500 152V183M352 243L358 302M358 255H366M365 248L367 284M339 268L354 266M290 328L312 332M306 292L313 311M326 287L330 305M186 366H206M191 362V380M201 343V360" stroke="#2b2bc8"/>
          ${LOTS.map(([x, y]) => svg`<path d=${`M${x} ${y}V371`} stroke="#2b2bc8"/><circle cx=${x} cy=${y} r="2.800" fill="#2a1fd0"/>`)}
          ${[[352, 242], [339, 268], [326, 287], [306, 292], [289, 328]].map(([x, y]) => svg`<circle cx=${x} cy=${y} r="2.800" fill="#2a1fd0"/>`)}
          <path d="M322 163H325V175H322Z" fill="#3b3bc8"/>
          <path d="M186 209L269 210L316 213L341 221L391 239L402 240M186 278H253M212 365L298 363Q305 350 307 335L313 311Q330 300 367 292L402 288" stroke="#35d5ee" stroke-width="1.500"/>
          ${HUBS.map(([x, y]) => svg`<circle cx=${x} cy=${y} r="3" fill="#20e0f2"/>`)}
          ${TREES.map(([x, y, r]) => svg`<circle cx=${x} cy=${y} r=${r} fill="#14cc28"/>`)}
          <g fill="#ff9230">
            <path d="M357 259L362 259L364 283L359 284ZM393 289H403V294H393ZM334 296L351 292L352 297L335 301ZM304 331H308V348H304ZM256 363H274V367H256Z"/>
            <g font-size="5">
              <text x="229" y="168">UNPLATTED LAND</text>
              <text x="200" y="380">GENERAL LAYDOWN LOTS</text>
              <text x="187" y="298">EASEMENT</text>
              <text x="289" y="302">LOT 22</text><text x="334" y="277">LOT 23</text><text x="386" y="265">LOT 1</text>
              <text x="278" y="326">LOT 9</text><text transform="translate(370 228) rotate(-90)">LOT 33 EAST</text>
            </g>
          </g>
          <path d="M334 193H337V202H334ZM345 235H348V245H345ZM258 306H261V317H258Z" fill="#111"/>
        </g>
        <path d="M186 152.500H402.500V408.500H186" stroke="#4a8fc9"/>
        <path d="M186 152.500H402" stroke="#3f42c4"/>
        <circle cx="201" cy="425" r="8.500" stroke="#444"/>
        <text x="199" y="427" font-size="6" fill="#222">2</text>
        <text x="212" y="425" font-size="6" fill="#333">TOPOGRAPHIC PLAN</text>
        <path d="M211 425.500H270" stroke="#333"/><path d="M213 426H241V429H213Z" fill="#000"/>
        <path d="M407.500 150V161.500H563.500V150" stroke="#4a97cc"/>
        <g font-size="4" fill="#444"><text x="409" y="155">GRATED CHANNEL</text><text x="409" y="160">DRAINAGE SLOPE ARROW</text></g>
        <path d="M475 150H483V156H475Z" fill="#1616e0"/><path d="M475 158.500H483M477 157L475 158.500L477 160" stroke="#444" stroke-width=".8"/>
        <path d="M569.500 150V446M606 150V447M186 446.500H607" stroke="#222" stroke-width="1.500"/>
        <path d="M569 231.500H606M595.500 231V360M569 360.500H606M569 374.500H606M569 387.500H606M569 401.500H606M569 415.500H606M569 428.500H606" stroke="#333"/>
        <path d="M613.500 150V455.500H186" stroke="#666" stroke-dasharray="6 1"/>
        <path d="M570 402H581V405H570ZM570 415H596V419H570Z" fill="#000"/>
        <g fill="#222" text-anchor="middle">
          <g font-size="6">
            <text transform="translate(577 294) rotate(-90)">11-27-451-003</text>
            <text transform="translate(584 294) rotate(-90)">NEAR LOUIS LANE</text>
            <text transform="translate(592 294) rotate(-90)">ROCK FALLS ILLINOIS</text>
            <text transform="translate(602 284) rotate(-90)">TOPOGRAPHIC PLAN</text>
          </g>
          <g font-size="7">
            <text x="587" y="372">1</text>
            <text x="587" y="385">NAVEED</text>
            <text x="586" y="398">BB</text>
            <text x="587" y="412">Oct-24</text>
            <text x="588" y="427">AS NOTED</text>
            <text x="584" y="442">2 OF 4</text>
          </g>
        </g>
        <g fill="#333" font-size="4">
          <text x="570" y="365">DRAWING</text><text x="570" y="378">DRAWN BY:</text><text x="570" y="392">REVIEWED BY:</text><text x="570" y="432">SHEET NO.</text>
        </g>
      </svg>
      <div class="notes">
        <h2 class="title">TOPOGRAPHIC PLAN NOTES:</h2>
        <ul class="list">${NOTES.map((n) => html`<li>${n.map((l) => html`<span class="line">${l}</span>`)}</li>`)}</ul>
      </div>`;
  }
}

@customElement("drawing-area")
class DrawingArea extends LitElement {
  static styles = [base, css`
    :host { display: block; position: relative; flex: 1; background: #8b8b8b; overflow: hidden; }
    plan-sheet { position: absolute; left: 0; top: 0; }
    .ucs { position: absolute; left: 14px; bottom: 6px; }
    .doc { position: absolute; right: 7px; top: 7px; display: flex; gap: 5px; }
    .nav { position: absolute; right: 4px; top: 155px; width: 23px; height: 98px; background: #9a9a9a; border: 1px solid #6f6f6f;
      border-radius: 3px; color: #8a8a8a; display: flex; flex-direction: column; align-items: center; padding: 15px 0 5px; gap: 8px; }
    .command { position: absolute; left: 161px; right: 160px; bottom: 1px; height: 19px; display: flex; background: #e0e0e0; }
    .handle { display: flex; align-items: center; gap: 7px; width: 41px; flex: none; background: #4b4f5c; padding-left: 3px; color: #d5d8de; }
    .dots { width: 4px; height: 13px; border-left: 2px dotted #a5a9b2; border-right: 2px dotted #a5a9b2; }
    .prompt { gap: 1px; padding: 0 5px 0 3px; color: #666; }
    .command input { flex: 1; font: italic 9px "DejaVu Sans Mono", monospace; }
    .command input::placeholder { color: #8b8b8b; opacity: 1; }
    .history { width: 11px; color: #666; }
  `];
  render() {
    return html`
      <plan-sheet></plan-sheet>
      <svg class="ucs" width="42" height="68" viewBox="0 0 42 68" fill="none" stroke="#3a55c8" stroke-width="1.200">
        <path d="M5.500 3V65.500H41ZM5.500 60H11V65.500M8 22L12 25L16 20M12 25V30M26 56L35 64M35 56L26 64"/>
      </svg>
      <div class="doc">
        <button aria-label="Minimize drawing">${icon("docMin", 10)}</button>
        <button aria-label="Restore drawing">${icon("docRestore", 10)}</button>
        <button aria-label="Close drawing">${icon("docClose", 10)}</button>
      </div>
      <div class="nav">${icon("wheel", 16)}${icon("hand", 16)}${icon("zoomext", 16)}</div>
      <div class="command">
        <div class="handle"><span class="dots"></span>
          <button aria-label="Close command line">${icon("close", 8)}</button>
          <button aria-label="Customize">${icon("wrench", 12)}</button></div>
        <button class="prompt" aria-label="Recent commands">${icon("prompt", 12)}${icon("caret", 6)}</button>
        <input type="text" aria-label="Command" placeholder="Type a command" />
        <button class="history" aria-label="Command history">${icon("caretUp", 6)}</button>
      </div>`;
  }
}

@customElement("snap-bar")
class SnapBar extends LitElement {
  static styles = [base, css`
    :host { display: flex; flex-direction: column; align-items: center; width: 23px; background: #303a4c; border-right: 1px solid #4a5364; overflow: hidden; }
    .grip { height: 7px; overflow: hidden; flex: none; }
    .tool { height: 16px; width: 18px; flex: none; }
    .rule { width: 14px; height: 2px; background: #cfd3d9; margin: 2px 0; flex: none; }
  `];
  private order = [1, 2, 3, 4, 5, 6, 7, 8, 9, 10, 11, 12, 13, 0, 14, 0, 15, 16, 17, 0, 18, 19, 20, 21, 22];
  render() {
    return html`<span class="grip">${icon("grip", 11)}</span>
      ${this.order.map((n) => (n ? html`<button class="tool" aria-label="Snap tool ${n}">${icon("s" + n)}</button>` : html`<span class="rule"></span>`))}`;
  }
}

@customElement("status-bar")
class StatusBar extends LitElement {
  static styles = [base, css`
    :host { display: flex; align-items: center; height: 27px; padding: 0 0 2px 12px; background: #202736; color: #d5d9df; border-top: 1px solid #3b4453; }
    .slash { width: 1px; height: 11px; background: #3f4756; transform: skewX(-22deg); margin: 0 8px; }
    .active { align-self: stretch; display: flex; align-items: center; margin-left: 6px; padding: 0 12px; background: #3b4453; color: #fff;
      font-weight: 700; white-space: nowrap; clip-path: polygon(7px 0, 100% 0, calc(100% - 7px) 100%, 0 100%); }
    .tools { margin-left: auto; display: flex; align-items: center; }
    .tools button { height: 17px; width: 18px; background: #2b3344; }
    .tools .text { width: 30px; background: #353e4f; margin-right: 1px; }
    .tools .drop { width: 13px; }
    .tools .on { width: 16px; background: #5b95dd; color: #fff; margin-right: 1px; }
    .tools .wide { width: 20px; }
    .tools .gap { margin-left: 3px; }
    .tools .plain { background: none; width: 20px; }
  `];
  private tool(name: string, label: string, cls = "", size = 12) {
    return html`<button class=${cls} aria-label=${label}>${icon(name, size)}</button>`;
  }
  private drop(label: string) {
    return this.tool("caret", label, "drop", 8);
  }
  render() {
    return html`
      <button aria-label="Layout menu">${icon("menu")}</button><span class="slash"></span>
      <a href="#">Model</a><span class="slash"></span><a href="#">SITE PLAN</a>
      <a class="active" href="#">TOPOGRPAHIC MAP</a>
      <a href="#">PRELIMINARY DESIGN PLAN</a><span class="slash"></span>
      <a href="#">UTILITIES PLAN</a><span class="slash"></span>
      <button aria-label="New layout">${icon("plus", 11)}</button><span class="slash"></span>
      <div class="tools">
        <button class="text">PAPER</button>
        ${this.tool("ortho", "Ortho mode")}${this.tool("polar", "Polar tracking")}${this.drop("Polar settings")}
        ${this.tool("iso", "Isometric drafting")}${this.drop("Isometric settings")}
        ${this.tool("otrack", "Object snap tracking", "on")}${this.tool("osnap", "Object snap", "on")}${this.drop("Snap settings")}
        ${this.tool("selcycle", "Selection cycling")}${this.tool("annot", "Annotation visibility")}${this.tool("annotAdd", "Add scales")}
        ${this.tool("gear", "Workspace switching", "wide")}${this.drop("Workspace list")}${this.tool("plus", "Annotation monitor")}
        ${this.tool("isolate", "Isolate objects", "wide")}${this.tool("hardware", "Graphics performance", "wide")}${this.drop("Graphics settings")}
        ${this.tool("tag", "Quick properties", "on")}
        ${this.tool("printOrange", "Plot", "gap")}${this.tool("cloudmix", "Data links")}
        ${this.tool("full", "Clean screen")}${this.tool("menu", "Customization", "plain")}
      </div>`;
  }
}

@customElement("recorder-strip")
class RecorderStrip extends LitElement {
  static styles = [base, css`
    :host { display: flex; flex-direction: column; align-items: center; width: 18px; padding: 0 0 4px; gap: 5px; background: #161616;
      border-radius: 0 3px 3px 0; color: #f2f2f2; }
    .top { display: flex; gap: 2px; height: 10px; align-items: center; font-size: 6px; padding-top: 2px; }
    .time { font-size: 6px; line-height: 6px; color: #8f8f8f; margin-top: -3px; }
    .rule { width: 18px; border-top: 1px dotted #777; }
  `];
  render() {
    return html`
      <span class="top">${icon("windows", 7)}•••</span>
      <button aria-label="Screenshot">${icon("camera", 13)}</button>
      <button aria-label="Stop recording">${icon("record", 15)}</button>
      <span class="time">02:22</span>
      <button aria-label="Microphone">${icon("mic", 14)}</button>
      <button aria-label="Speaker">${icon("speaker", 13)}</button>
      <button aria-label="Webcam">${icon("webcam", 14)}</button>
      <span class="rule"></span>
      <button aria-label="Gallery">${icon("gallery", 14)}</button>
      <button aria-label="Settings">${icon("gear", 14)}</button>`;
  }
}

@customElement("app-root")
class AppRoot extends LitElement {
  static styles = [base, css`
    :host { display: flex; flex-direction: column; height: 100vh; padding: 14px 0; background: #000; position: relative;
      font: 9px/1.3 Lato, "Open Sans", sans-serif; overflow: hidden; }
    .frame { flex: 1; display: flex; flex-direction: column; min-height: 0; background: #1f2532; border-left: 2px solid #dcecf5; }
    .inner { flex: 1; display: flex; flex-direction: column; min-height: 0; border: solid #1d6a9c; border-width: 1px 0 1px 2px; padding-right: 2px; }
    .work { flex: 1; display: flex; min-height: 0; }
    recorder-strip { position: absolute; left: 0; bottom: 40px; }
  `];
  render() {
    return html`
      <div class="frame"><div class="inner">
        <title-bar></title-bar>
        <ribbon-area></ribbon-area>
        <file-tabs></file-tabs>
        <div class="work"><tool-space></tool-space><drawing-area></drawing-area><snap-bar></snap-bar></div>
        <status-bar></status-bar>
      </div></div>
      <recorder-strip></recorder-strip>`;
  }
}
